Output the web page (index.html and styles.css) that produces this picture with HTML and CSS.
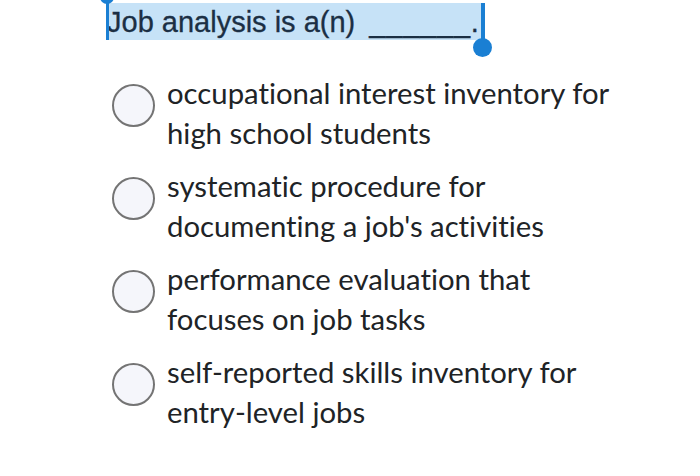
FILE: index.html
```html
<!DOCTYPE html>
<html>
<head>
<meta charset="utf-8">
<link rel="stylesheet" href="styles.css">
</head>
<body>
<div class="page">
  <div class="question">
    <span class="selected">Job analysis is a(n) <span class="blank">______</span>.<span class="handle handle-start"></span><span class="handle handle-end"></span></span>
  </div>
  <ul class="options">
    <li class="option"><span class="radio"></span><span class="label">occupational interest inventory for high school students</span></li>
    <li class="option"><span class="radio"></span><span class="label">systematic procedure for documenting a job's activities</span></li>
    <li class="option"><span class="radio"></span><span class="label">performance evaluation that focuses on job tasks</span></li>
    <li class="option"><span class="radio"></span><span class="label">self-reported skills inventory for entry-level jobs</span></li>
  </ul>
</div>
</body>
</html>
```
FILE: styles.css
```css
html, body {
  margin: 0;
  padding: 0;
  background: #ffffff;
}
.page {
  width: 700px;
  height: 476px;
  overflow: hidden;
  padding-left: 107px;
  box-sizing: border-box;
}
.question {
  padding-top: 3px;
}
.selected {
  position: relative;
  display: inline-block;
  height: 37px;
  line-height: 38px;
  padding-right: 3px;
  background: #c6e2f7;
  font-family: "Liberation Sans", Arial, sans-serif;
  font-size: 29px;
  color: #1b2f44;
  white-space: pre;
  -webkit-text-stroke: 0.3px #1b2f44;
}
.blank {
  margin-left: 6px;
  letter-spacing: 0.8px;
}
.handle {
  position: absolute;
  background: #1a7fd3;
  width: 3px;
}
.handle-start {
  left: -1px;
  top: -3px;
  height: 40px;
}
.handle-start::before {
  content: "";
  position: absolute;
  left: -6px;
  top: -10px;
  width: 14px;
  height: 14px;
  border-radius: 50%;
  background: #1a7fd3;
}
.handle-end {
  right: -3px;
  top: 0;
  height: 44px;
  width: 4px;
}
.handle-end::after {
  content: "";
  position: absolute;
  left: -8px;
  top: 35px;
  width: 19px;
  height: 19px;
  border-radius: 50%;
  background: #1a7fd3;
}
.options {
  list-style: none;
  margin: 33px 0 0 5px;
  padding: 0;
  display: flex;
  flex-direction: column;
  gap: 13px;
}
.option {
  display: flex;
  align-items: flex-start;
  gap: 12px;
}
.radio {
  flex: none;
  width: 39px;
  height: 39px;
  margin-top: 11px;
  border: 2px solid #747474;
  border-radius: 50%;
  background: #f5f6fb;
}
.label {
  width: 460px;
  font-family: Lato, "Open Sans", sans-serif;
  font-size: 29.3px;
  line-height: 40px;
  color: #202326;
  font-variant-ligatures: none;
  font-feature-settings: "liga" 0;
}
```
